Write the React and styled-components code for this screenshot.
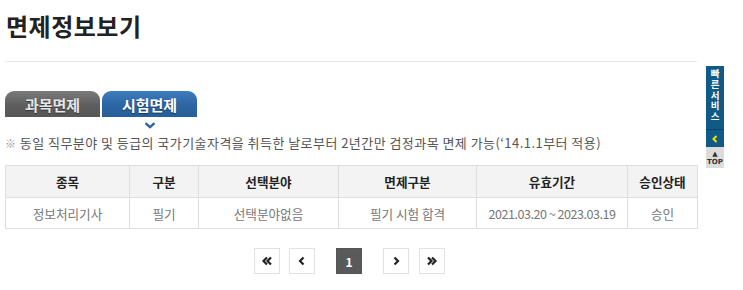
import React from "react";
import styled, { createGlobalStyle } from "styled-components";

const Global = createGlobalStyle`
  html, body { margin: 0; padding: 0; background: #fff; }
  body { font-family: "Noto Sans CJK KR", "Noto Sans", sans-serif; color: #333; }
`;

const Page = styled.div`
  position: relative;
  width: 743px;
  height: 290px;
  padding: 0 46px 0 5px;
  box-sizing: border-box;
  overflow: hidden;
`;

const Header = styled.div`
  height: 62px;
  border-bottom: 1px solid #e8e8e8;
  box-sizing: border-box;
  display: flex;
  align-items: flex-start;
`;

const Title = styled.h1`
  margin: 10px 0 0 1px;
  font-size: 24px;
  line-height: 32px;
  font-weight: 700;
  color: #222;
  letter-spacing: 0.5px;
`;

const Tabs = styled.div`
  display: flex;
  gap: 2px;
  margin-top: 29px;
`;

const Tab = styled.div`
  position: relative;
  width: 95px;
  height: 26px;
  border-radius: 9px 9px 0 0;
  display: flex;
  align-items: center;
  justify-content: center;
  font-size: 15px;
  font-weight: 700;
  color: ${(p) => (p.$active ? "#ffffff" : "#e6e6e6")};
  text-shadow: 0 1px 1px rgba(0, 0, 0, 0.45);
  background: ${(p) =>
    p.$active
      ? "linear-gradient(#3f7cbd, #2b65a3 55%, #275e99)"
      : "linear-gradient(#7a7a7a, #5e5e5e 55%, #565656)"};
`;

const Chevron = styled.svg`
  position: absolute;
  left: 50%;
  top: 31px;
  margin-left: -6px;
`;

const Notice = styled.p`
  margin: 17px 0 0;
  font-size: 13px;
  letter-spacing: 0.45px;
  line-height: 18px;
  color: #555;
  white-space: nowrap;
`;

const Mark = styled.span`
  color: #999;
  font-size: 11px;
`;

const Table = styled.table`
  margin-top: 13px;
  width: 692px;
  border-collapse: collapse;
  table-layout: fixed;
  font-size: 12.6px;
`;

const Th = styled.th`
  height: 31px;
  padding: 0;
  background: #f3f3f3;
  border: 1px solid #dedede;
  color: #222;
  font-weight: 700;
  text-align: center;
`;

const Td = styled.td`
  height: 30px;
  padding: 0;
  border: 1px solid #dedede;
  color: #777;
  text-align: center;
  letter-spacing: ${(p) => (p.$tight ? "-0.5px" : "0")};
`;

const Pager = styled.div`
  display: flex;
  justify-content: center;
  align-items: center;
  margin-top: 19px;
  padding-right: 3px;
`;

const PageBtn = styled.div`
  width: 26px;
  height: 26px;
  box-sizing: border-box;
  border: 1px solid ${(p) => (p.$active ? "#555" : "#e2e2e2")};
  background: ${(p) => (p.$active ? "#5a5a5a" : "#fff")};
  color: ${(p) => (p.$active ? "#fff" : "#222")};
  display: flex;
  align-items: center;
  justify-content: center;
  font-size: 12px;
  font-weight: 700;
  margin-left: ${(p) => p.$ml || 0}px;
`;

const Quick = styled.div`
  position: absolute;
  left: 706px;
  top: 66px;
  width: 18px;
  display: flex;
  flex-direction: column;
`;

const QuickLabel = styled.div`
  background: #0f5a86;
  height: 64px;
  border-bottom: 1px solid #0a4467;
  display: flex;
  justify-content: center;
  align-items: flex-start;
  padding-top: 3px;
  box-sizing: border-box;
`;

const QuickText = styled.span`
  writing-mode: vertical-rl;
  text-orientation: upright;
  color: #fff;
  font-size: 9.5px;
  font-weight: 700;
  letter-spacing: 1.2px;
  line-height: 18px;
`;

const QuickArrow = styled.div`
  background: #0f5a86;
  height: 17px;
  display: flex;
  align-items: center;
  justify-content: center;
`;

const TopBtn = styled.div`
  background: #dcdcdc;
  height: 21px;
  display: flex;
  flex-direction: column;
  align-items: center;
  justify-content: center;
  color: #333;
  font-size: 7px;
  font-weight: 700;
  line-height: 8px;
  font-family: "DejaVu Sans", sans-serif;
`;

const cols = [124, 69, 140, 138, 151, 70];
const heads = ["종목", "구분", "선택분야", "면제구분", "유효기간", "승인상태"];
const row = ["정보처리기사", "필기", "선택분야없음", "필기 시험 합격", "2021.03.20 ~ 2023.03.19", "승인"];

const Arrow = ({ d }) => (
  <svg width="12" height="10" viewBox="0 0 12 10">
    <path d={d} fill="none" stroke="#222" strokeWidth="2.2" strokeLinejoin="miter" />
  </svg>
);

export default function App() {
  return (
    <>
      <Global />
      <Page>
        <Header>
          <Title>면제정보보기</Title>
        </Header>
        <Tabs>
          <Tab>과목면제</Tab>
          <Tab $active>
            시험면제
            <Chevron width="12" height="7" viewBox="0 0 12 7">
              <path d="M1.5 1.2 L6 5.2 L10.5 1.2" fill="none" stroke="#2b65a3" strokeWidth="2.4" />
            </Chevron>
          </Tab>
        </Tabs>
        <Notice>
          <Mark>※</Mark> 동일 직무분야 및 등급의 국가기술자격을 취득한 날로부터 2년간만 검정과목 면제 가능(‘14.1.1부터 적용)
        </Notice>
        <Table>
          <colgroup>
            {cols.map((w, i) => (
              <col key={i} style={{ width: w }} />
            ))}
          </colgroup>
          <thead>
            <tr>
              {heads.map((h) => (
                <Th key={h}>{h}</Th>
              ))}
            </tr>
          </thead>
          <tbody>
            <tr>
              {row.map((c, i) => (
                <Td key={i} $tight={i === 4}>{c}</Td>
              ))}
            </tr>
          </tbody>
        </Table>
        <Pager>
          <PageBtn>
            <Arrow d="M6 1.5 L2.5 5 L6 8.5 M10 1.5 L6.5 5 L10 8.5" />
          </PageBtn>
          <PageBtn $ml={9}>
            <Arrow d="M7.5 1.5 L4 5 L7.5 8.5" />
          </PageBtn>
          <PageBtn $active $ml={21}>1</PageBtn>
          <PageBtn $ml={21}>
            <Arrow d="M4.5 1.5 L8 5 L4.5 8.5" />
          </PageBtn>
          <PageBtn $ml={10}>
            <Arrow d="M2 1.5 L5.5 5 L2 8.5 M6 1.5 L9.5 5 L6 8.5" />
          </PageBtn>
        </Pager>
        <Quick>
          <QuickLabel>
            <QuickText>빠른서비스</QuickText>
          </QuickLabel>
          <QuickArrow>
            <svg width="8" height="8" viewBox="0 0 8 8">
              <path d="M5.5 1 L2.5 4 L5.5 7" fill="none" stroke="#f2e000" strokeWidth="2" />
            </svg>
          </QuickArrow>
          <TopBtn>
            <span>▲</span>
            <span>TOP</span>
          </TopBtn>
        </Quick>
      </Page>
    </>
  );
}
